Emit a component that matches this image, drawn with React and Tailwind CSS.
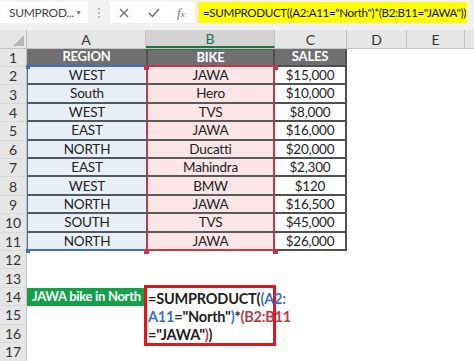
import React from "react"

const data = [
  ["WEST", "JAWA", "$15,000"],
  ["South", "Hero", "$10,000"],
  ["WEST", "TVS", "$8,000"],
  ["EAST", "JAWA", "$16,000"],
  ["NORTH", "Ducatti", "$20,000"],
  ["EAST", "Mahindra", "$2,300"],
  ["WEST", "BMW", "$120"],
  ["NORTH", "JAWA", "$16,500"],
  ["SOUTH", "TVS", "$45,000"],
  ["NORTH", "JAWA", "$26,000"],
]

function RowHead({ n, tall }) {
  return (
    <div
      className={`w-[27px] shrink-0 bg-[#e6e6e6] border-r border-[#c4c4c4] border-b border-b-[#d9d9d9] flex items-center justify-center text-[14px] text-[#333] ${
        tall ? "h-[18.42px]" : "h-[18px]"
      }`}
    >
      {n}
    </div>
  )
}

export default function App() {
  return (
    <div className="w-[474px] h-[361px] overflow-hidden bg-white font-[Lato,sans-serif] relative">
      {/* Formula bar */}
      <div className="h-[30px] bg-[#f1f1f1] flex items-start pt-[2px]">
        <div className="w-[88px] h-[21px] bg-white flex items-center pl-[9px] text-[12px] tracking-[-0.3px] text-[#444] relative">
          SUMPROD...
          <span className="absolute left-[75px] top-[5px] text-[7px] text-[#777]">▼</span>
        </div>
        <div className="w-[22px] h-[21px] flex flex-col items-center justify-center gap-[2px]">
          <span className="w-[2px] h-[2px] bg-[#b5b5b5]" />
          <span className="w-[2px] h-[2px] bg-[#b5b5b5]" />
          <span className="w-[2px] h-[2px] bg-[#b5b5b5]" />
        </div>
        <div className="w-[85px] h-[21px] bg-white flex items-center">
          <svg className="ml-[9px]" width="10" height="10" viewBox="0 0 10 10">
            <path d="M1 1 L9 9 M9 1 L1 9" stroke="#6e6e6e" strokeWidth="1.3" />
          </svg>
          <svg className="ml-[19px]" width="12" height="10" viewBox="0 0 12 10">
            <path d="M1 5 L4.5 8.5 L11 1" stroke="#6e6e6e" strokeWidth="1.5" fill="none" />
          </svg>
          <span className="ml-[17px] font-['Liberation_Serif',serif] italic text-[13px] text-[#6e6e6e] leading-none">
            f<span className="text-[9px]">x</span>
          </span>
        </div>
        <div className="ml-[3px] w-[269px] h-[21px] bg-[#ffff00] flex items-center pl-[5px] text-[11.6px] tracking-[-0.35px] text-[#111] whitespace-nowrap overflow-hidden">
          =SUMPRODUCT((A2:A11="North")*(B2:B11="JAWA"))
        </div>
      </div>

      {/* Column headers */}
      <div className="h-[19px] flex bg-[#e6e6e6] border-b border-[#c4c4c4] text-[14px] text-[#333]">
        <div className="w-[27px] shrink-0 border-r border-[#c4c4c4] relative">
          <svg className="absolute right-[2px] bottom-[2px]" width="11" height="11" viewBox="0 0 11 11">
            <path d="M11 0 L11 11 L0 11 Z" fill="#b9b9b9" />
          </svg>
        </div>
        <div className="w-[119px] shrink-0 border-r border-[#c4c4c4] flex items-center justify-center">A</div>
        <div className="w-[129px] shrink-0 bg-[#d3d3d3] border-r border-[#c4c4c4] border-b-2 border-b-[#217346] flex items-center justify-center text-[#217346]">
          B
        </div>
        <div className="w-[72px] shrink-0 border-r border-[#c4c4c4] flex items-center justify-center">C</div>
        <div className="w-[60px] shrink-0 border-r border-[#c4c4c4] flex items-center justify-center">D</div>
        <div className="w-[58px] shrink-0 border-r border-[#c4c4c4] flex items-center justify-center">E</div>
        <div className="flex-1" />
      </div>

      {/* Row 1 */}
      <div className="flex h-[18px]">
        <RowHead n={1} />
        <div className="w-[119px] shrink-0 bg-[#707070] border-b-2 border-[#3f6fc6] text-white font-bold text-[13px] tracking-[-0.2px] flex items-center justify-center">
          REGION
        </div>
        <div className="w-[129px] shrink-0 bg-[#707070] border-x-2 border-l-[#505050] border-r-[#505050] border-t border-t-[#2f6b45] border-b-2 border-b-[#c0394b] text-white font-bold text-[13px] tracking-[-0.2px] flex items-center justify-center">
          BIKE
        </div>
        <div className="w-[72px] shrink-0 bg-[#707070] border-r-2 border-[#505050] border-b-2 border-b-[#505050] text-white font-bold text-[13px] tracking-[-0.2px] flex items-center justify-center">
          SALES
        </div>
      </div>

      {/* Data rows */}
      {data.map((r, i) => {
        const last = i === data.length - 1
        return (
          <div key={i} className="flex h-[18.42px] text-[13.5px] tracking-[-0.2px] text-[#222]">
            <RowHead n={i + 2} tall />
            <div
              className={`w-[119px] shrink-0 bg-[#e9eff9] border-l border-l-[#3f6fc6] border-b-2 ${
                last ? "border-b-[#3f6fc6]" : "border-b-[#505866]"
              } flex items-center justify-center`}
            >
              {r[0]}
            </div>
            <div
              className={`w-[129px] shrink-0 bg-[#fbe5e6] border-x-2 border-x-[#c0394b] border-b-2 ${
                last ? "border-b-[#c0394b]" : "border-b-[#5a5a5a]"
              } flex items-center justify-center`}
            >
              {r[1]}
            </div>
            <div className="w-[72px] shrink-0 bg-white border-r-2 border-r-[#505050] border-b-2 border-b-[#505050] flex items-center justify-center">
              {r[2]}
            </div>
          </div>
        )
      })}

      {/* Rows 12-17 */}
      {[12, 13, 14, 15, 16, 17].map((n) => (
        <div key={n} className="flex h-[18.42px]">
          <RowHead n={n} tall />
          {n === 14 && (
            <div className="w-[118px] shrink-0 bg-[#13a04b] text-white font-bold text-[13px] tracking-[-0.3px] flex items-center pl-[5px] whitespace-nowrap">
              JAWA bike in North
            </div>
          )}
        </div>
      ))}

      {/* Range corner handles */}
      <span className="absolute left-[26px] top-[65px] w-[4px] h-[4px] bg-[#3f6fc6]" />
      <span className="absolute left-[144px] top-[65px] w-[5px] h-[5px] bg-[#c0394b]" />
      <span className="absolute left-[273px] top-[65px] w-[5px] h-[5px] bg-[#c0394b]" />
      <span className="absolute left-[26px] top-[249px] w-[4px] h-[4px] bg-[#3f6fc6]" />
      <span className="absolute left-[144px] top-[249px] w-[5px] h-[5px] bg-[#c0394b]" />
      <span className="absolute left-[273px] top-[249px] w-[5px] h-[5px] bg-[#c0394b]" />

      {/* Formula being edited in B14 */}
      <div className="absolute left-[144px] top-[285px] w-[132px] h-[61px] border-[3px] border-[#e8141b] bg-white pl-[1px] pt-[2px] text-[14.5px] tracking-[-0.2px] font-bold leading-[18px] text-[#222] whitespace-nowrap">
        <div>
          =SUMPRODUCT(<span className="text-[#3f6fc6]">(A2:</span>
        </div>
        <div>
          <span className="text-[#3f6fc6]">A11</span>="North"<span className="text-[#3f6fc6]">)</span>*
          <span className="text-[#c0394b]">(B2:B11</span>
        </div>
        <div>
          ="JAWA"<span className="text-[#c0394b]">)</span>)
        </div>
      </div>
    </div>
  )
}
